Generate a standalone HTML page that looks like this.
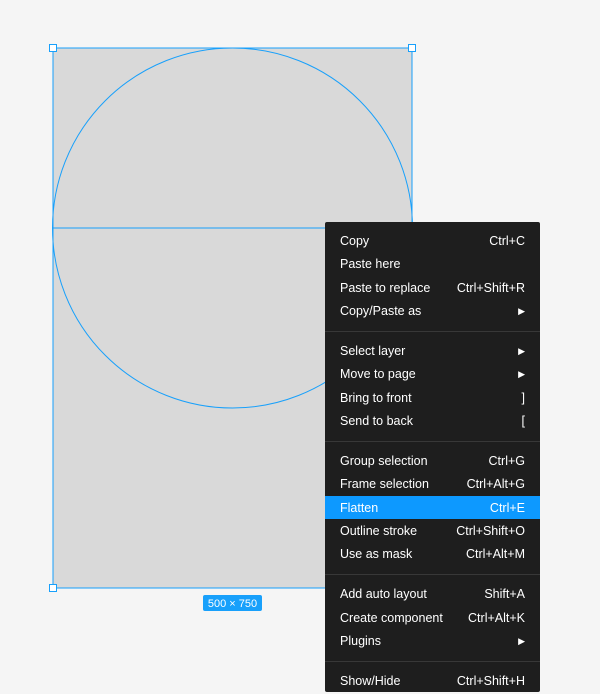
<!DOCTYPE html><html><head><style>
body{margin:0;width:600px;height:679px;background:#f5f5f5;position:relative;overflow:hidden;font-family:"Liberation Sans",sans-serif}
.menu{position:absolute;left:325px;top:222px;width:215px;height:470px;background:#1e1e1e;border-radius:2px;color:#fff;font-size:12.5px}
.it{position:absolute;left:0;right:0;height:23px;line-height:25px}
.it .l{position:absolute;left:15px}.it .r{position:absolute;right:15px}
.sep{position:absolute;left:0;right:0;height:1px;background:#383838}
.hl{background:#0d99ff}
.tri{font-size:9px}
</style></head><body>
<svg width="600" height="679" style="position:absolute;left:0;top:0">
<rect x="53" y="48" width="359" height="540" fill="#d9d9d9" stroke="#18a0fb" stroke-width="1"/>
<circle cx="232.5" cy="228" r="180" fill="none" stroke="#18a0fb" stroke-width="1"/>
<line x1="53" y1="228" x2="412" y2="228" stroke="#18a0fb"/>
<g fill="#fff" stroke="#18a0fb"><rect x="49.5" y="44.5" width="7" height="7"/><rect x="408.5" y="44.5" width="7" height="7"/><rect x="49.5" y="584.5" width="7" height="7"/></g>
<rect x="203" y="595" width="59" height="16" rx="2" fill="#18a0fb"/>
<text x="232.5" y="607" fill="#fff" font-size="11" text-anchor="middle" font-family="Liberation Sans">500 × 750</text>
</svg>
<div class="menu">
<div class="it" style="top:7px"><span class="l">Copy</span><span class="r">Ctrl+C</span></div>
<div class="it" style="top:30px"><span class="l">Paste here</span></div>
<div class="it" style="top:54px"><span class="l">Paste to replace</span><span class="r">Ctrl+Shift+R</span></div>
<div class="it" style="top:77px"><span class="l">Copy/Paste as</span><span class="r tri">▶</span></div>
<div class="sep" style="top:109px"></div>
<div class="it" style="top:117px"><span class="l">Select layer</span><span class="r tri">▶</span></div>
<div class="it" style="top:140px"><span class="l">Move to page</span><span class="r tri">▶</span></div>
<div class="it" style="top:164px"><span class="l">Bring to front</span><span class="r">]</span></div>
<div class="it" style="top:187px"><span class="l">Send to back</span><span class="r">[</span></div>
<div class="sep" style="top:219px"></div>
<div class="it" style="top:227px"><span class="l">Group selection</span><span class="r">Ctrl+G</span></div>
<div class="it" style="top:250px"><span class="l">Frame selection</span><span class="r">Ctrl+Alt+G</span></div>
<div class="it hl" style="top:274px"><span class="l">Flatten</span><span class="r">Ctrl+E</span></div>
<div class="it" style="top:297px"><span class="l">Outline stroke</span><span class="r">Ctrl+Shift+O</span></div>
<div class="it" style="top:320px"><span class="l">Use as mask</span><span class="r">Ctrl+Alt+M</span></div>
<div class="sep" style="top:352px"></div>
<div class="it" style="top:360px"><span class="l">Add auto layout</span><span class="r">Shift+A</span></div>
<div class="it" style="top:384px"><span class="l">Create component</span><span class="r">Ctrl+Alt+K</span></div>
<div class="it" style="top:407px"><span class="l">Plugins</span><span class="r tri">▶</span></div>
<div class="sep" style="top:439px"></div>
<div class="it" style="top:447px"><span class="l">Show/Hide</span><span class="r">Ctrl+Shift+H</span></div>
</div>
</body></html>
